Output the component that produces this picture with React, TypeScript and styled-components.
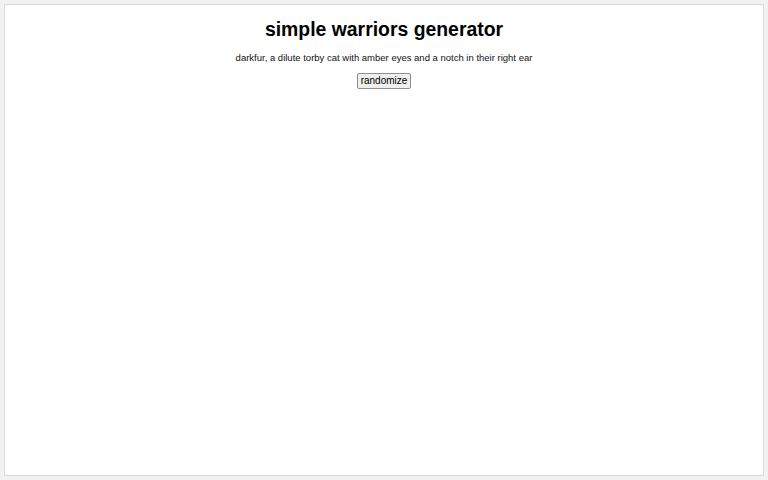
import React, { useState } from "react";
import styled, { createGlobalStyle } from "styled-components";

const GlobalStyle = createGlobalStyle`
    html, body {
        margin: 0;
        padding: 0;
        background-color: #f1f1f1;
        font-family: "Liberation Sans", Arial, sans-serif;
    }
`;

const NAMES = ["darkfur", "stormpelt", "mossleaf", "ashclaw", "fernwhisker"];
const PELTS = ["a dilute torby", "a ginger tabby", "a silver", "a tortoiseshell"];
const EYES = ["amber", "green", "blue", "yellow"];
const SCARS = ["a notch in their right ear", "a scar across their muzzle", "a torn left ear"];

const pick = (list: string[]) => list[Math.floor(Math.random() * list.length)];

const App: React.FC = () => {
    const [cat, setCat] = useState(
        "darkfur, a dilute torby cat with amber eyes and a notch in their right ear"
    );

    function handleRandomize() {
        setCat(`${pick(NAMES)}, ${pick(PELTS)} cat with ${pick(EYES)} eyes and ${pick(SCARS)}`);
    }

    return (
        <>
            <GlobalStyle />
            <Page>
                <Card>
                    <Title>simple warriors generator</Title>
                    <Description>{cat}</Description>
                    <RandomButton onClick={handleRandomize}>randomize</RandomButton>
                </Card>
            </Page>
        </>
    );
};

const Page = styled.div`
    padding: 4px;
    height: 480px;
    box-sizing: border-box;
`;

const Card = styled.div`
    display: flex;
    flex-direction: column;
    align-items: center;
    height: 100%;
    box-sizing: border-box;
    background-color: #ffffff;
    border: 1px solid #dcdcdc;
    padding-top: 12px;
`;

const Title = styled.h1`
    margin: 0;
    font-size: 19.4px;
    font-weight: 700;
    color: #000;
    line-height: 24px;
`;

const Description = styled.p`
    margin: 11px 0 0;
    font-size: 9.5px;
    line-height: 12px;
    color: #111;
`;

const RandomButton = styled.button`
    margin-top: 9px;
    font-family: "Liberation Sans", Arial, sans-serif;
    font-size: 10px;
    line-height: 12px;
    padding: 1px 3px;
    color: #000;
    background-color: #efefef;
    border: 1px solid #8f8f8f;
    border-radius: 2px;
    cursor: pointer;
`;

export default App;
